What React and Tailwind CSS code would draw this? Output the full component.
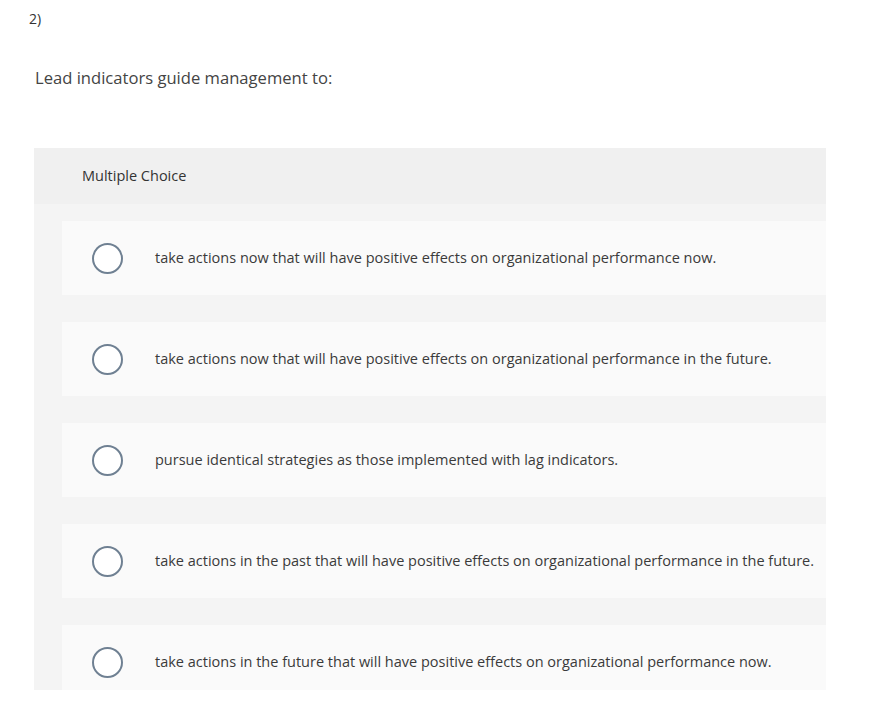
import React from "react";

const options = [
  "take actions now that will have positive effects on organizational performance now.",
  "take actions now that will have positive effects on organizational performance in the future.",
  "pursue identical strategies as those implemented with lag indicators.",
  "take actions in the past that will have positive effects on organizational performance in the future.",
  "take actions in the future that will have positive effects on organizational performance now.",
];

export default function App() {
  return (
    <div className="w-[883px] h-[708px] bg-white overflow-hidden text-[#333]" style={{ fontFamily: "'Open Sans', Lato, sans-serif" }}>
      <div className="pt-[10px] pl-[29px] text-[14px] leading-[18px] text-[#333]">2)</div>
      <div className="mt-[40px] pl-[35px] text-[16.6px] leading-[20px] text-[#444]">Lead indicators guide management to:</div>
      <div className="mt-[60px] ml-[34px] w-[792px] h-[542px] bg-[#f4f4f4] overflow-hidden">
        <div className="h-[56px] bg-[#f0f0f0] flex items-center pl-[48px] text-[14.5px] text-[#333]">Multiple Choice</div>
        <div className="pl-[28px] pt-[17px] flex flex-col gap-[27px]">
          {options.map((o, i) => (
            <div key={i} className="h-[74px] bg-[#fafafa] flex items-center">
              <div className="ml-[30px] w-[31px] h-[31px] rounded-full border-2 border-[#6f8092] bg-white shrink-0" />
              <div className="ml-[32px] text-[14.5px] text-[#3a3a3a]">{o}</div>
            </div>
          ))}
        </div>
      </div>
    </div>
  );
}
